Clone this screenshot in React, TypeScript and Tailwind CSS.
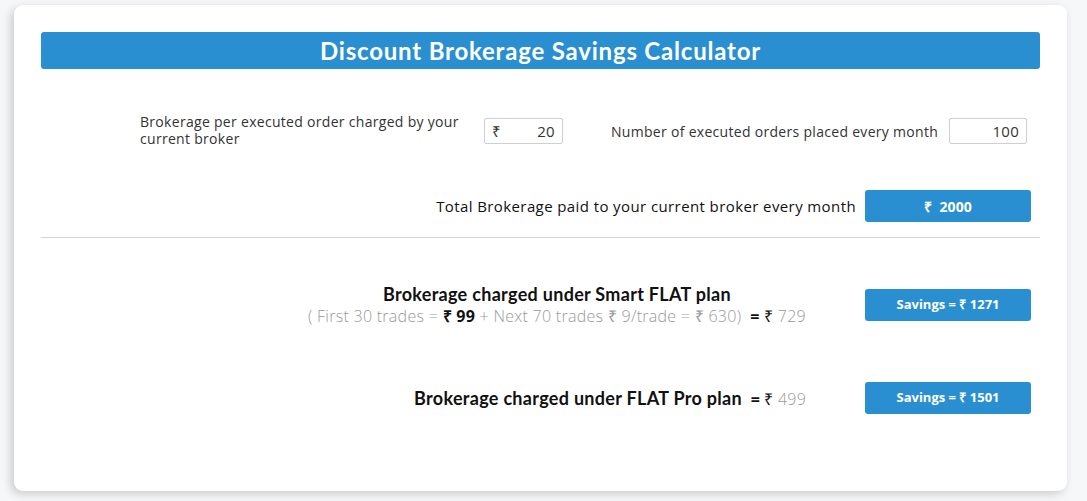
export default function App() {
  const inputCls =
    'flex items-center h-[26px] border border-[#cfcfcf] rounded-[2px] bg-white px-[7px] text-[15px] text-[#333]';

  return (
    <div className="min-h-screen bg-[#f6f7f8] pl-[14px] pr-[20px] pt-[5px] pb-[9px] font-['Open_Sans',sans-serif]">
      <div className="h-[486px] w-[1053px] bg-white rounded-[9px] shadow-[-3px_3px_10px_rgba(0,0,0,0.18)] px-[27px] pt-[27px]">
        <div className="h-[37px] rounded-[3px] bg-[#2a8fd0] flex items-center justify-center">
          <h1 className="font-['Lato',sans-serif] font-bold text-[24px] text-white tracking-[0.8px]">
            Discount Brokerage Savings Calculator
          </h1>
        </div>

        <div className="mt-[46px] h-[32px] flex items-center pl-[99px] text-[14px] tracking-[0.3px] text-[#333]">
          <p className="w-[330px] leading-[17px] -mt-[2px]">
            Brokerage per executed order charged by your current broker
          </p>
          <div className={`${inputCls} ml-[14px] w-[79px] justify-between`}>
            <span>₹</span>
            <span>20</span>
          </div>
          <p className="ml-[48px]">Number of executed orders placed every month</p>
          <div className={`${inputCls} ml-[11px] w-[78px] justify-end`}>
            <span>100</span>
          </div>
        </div>

        <div className="mt-[43px] flex items-center justify-end pr-[9px]">
          <p className="text-[15px] font-medium tracking-[0.4px] text-[#111]">
            Total Brokerage paid to your current broker every month
          </p>
          <div className="ml-[9px] w-[166px] h-[32px] rounded-[3px] bg-[#2a8fd0] flex items-center justify-center text-white font-bold text-[14px]">
            ₹&nbsp; 2000
          </div>
        </div>

        <div className="mt-[15px] border-t border-[#d3d3d3]" />

        <div className="mt-[45px] flex items-center justify-end pr-[9px]">
          <div className="flex flex-col items-center">
            <p className="font-['Lato',sans-serif] font-bold text-[18px] tracking-[0.3px] text-[#111] leading-[22px]">
              Brokerage charged under Smart FLAT plan
            </p>
            <p className="text-[16px] font-light tracking-[0.28px] text-[#9a9a9a] leading-[22px]">
              ( First 30 trades = <span className="text-[#111] font-bold">₹ 99</span> + Next 70 trades ₹ 9/trade = ₹ 630)&nbsp;{' '}
              <span className="text-[#111] font-bold">=</span> <span className="text-[#111]">₹</span> 729
            </p>
          </div>
          <div className="ml-[59px] w-[166px] h-[32px] rounded-[3px] bg-[#2a8fd0] flex items-center justify-center text-white font-bold text-[13px]">
            Savings = ₹ 1271
          </div>
        </div>

        <div className="mt-[55px] flex items-center justify-end pr-[9px]">
          <p className="text-[16px] font-light tracking-[0.2px] text-[#9a9a9a]">
            <span className="font-['Lato',sans-serif] font-bold text-[18px] tracking-[0.3px] text-[#111]">
              Brokerage charged under FLAT Pro plan
            </span>
            &nbsp; <span className="text-[#111] font-bold">=</span> <span className="text-[#111]">₹</span> 499
          </p>
          <div className="ml-[59px] w-[166px] h-[32px] rounded-[3px] bg-[#2a8fd0] flex items-center justify-center text-white font-bold text-[13px]">
            Savings = ₹ 1501
          </div>
        </div>
      </div>
    </div>
  );
}
